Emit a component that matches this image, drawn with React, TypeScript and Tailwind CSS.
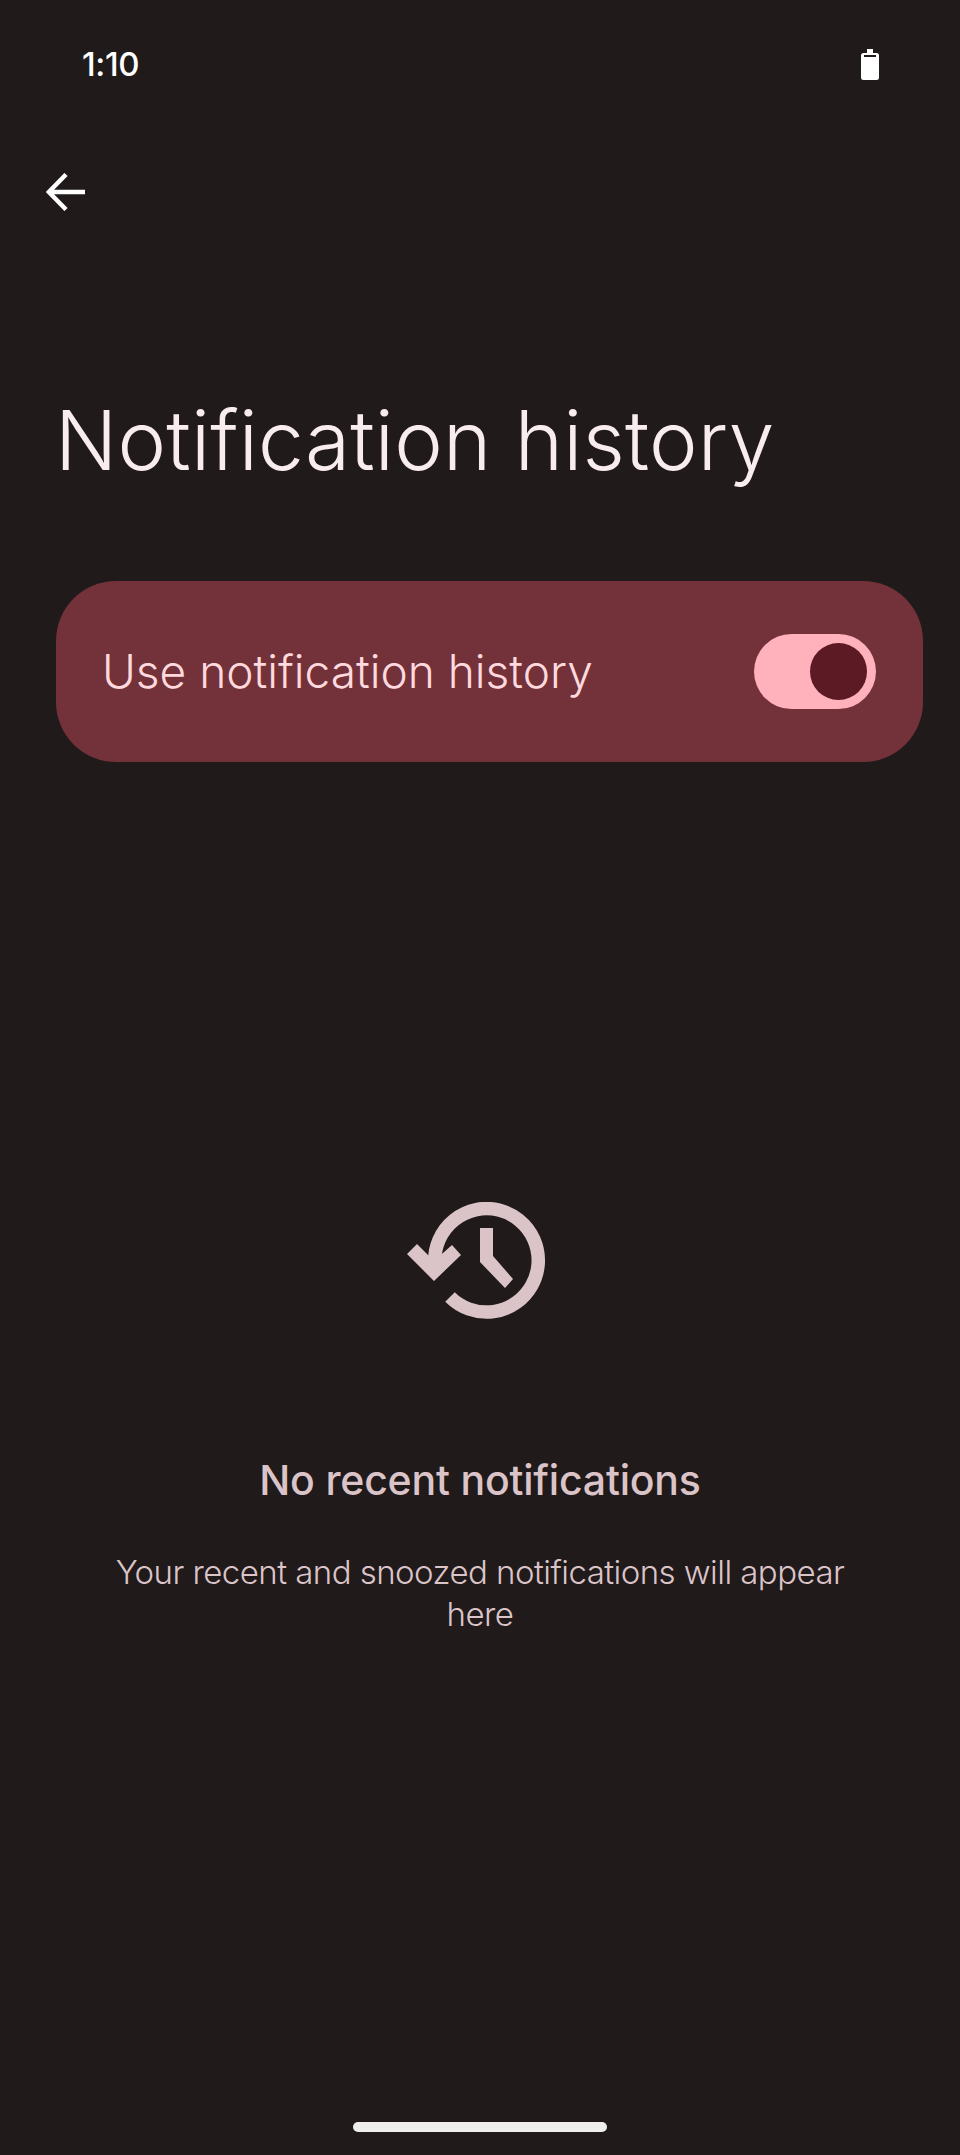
export default function App() {
  return (
    <div className="flex h-[2155px] w-[960px] flex-col overflow-hidden bg-[#201a1b] font-['Inter','Noto_Sans',sans-serif]">
      <div className="flex h-[129px] items-center justify-between pl-[82px] pr-[81px]">
        <span className="-mt-[1px] text-[33px] leading-[40px] font-medium tracking-[-0.4px] text-white">1:10</span>
        <svg width="18" height="31" viewBox="0 0 18 31" aria-hidden="true">
          <path d="M6 0h6v4h3.500A2.500 2.500 0 0 1 18 6.500V28.500A2.500 2.500 0 0 1 15.500 31H2.500A2.500 2.500 0 0 1 0 28.500V6.500A2.500 2.500 0 0 1 2.500 4H6z" fill="#fff" />
          <rect x="3" y="6" width="12" height="2" fill="#201a1b" />
        </svg>
      </div>
      <div className="mt-[44px] pl-[46px]">
        <svg className="block" width="39" height="38" viewBox="0 0 39 38" aria-hidden="true">
          <path d="M39 19H3M20 1.500 2.800 19 20 36.500" fill="none" stroke="#fff" strokeWidth="4.500" />
        </svg>
      </div>
      <h1 className="mt-[180px] pl-[55px] text-[82px] leading-[100px] font-[350] tracking-[0.2px] text-[#f9ecee]">Notification history</h1>
      <div className="ml-[56px] mt-[90px] flex h-[181px] w-[867px] items-center justify-between rounded-[60px] bg-[#733239] pl-[46px] pr-[47px]">
        <span className="-mt-[1px] text-[46px] leading-[60px] font-[350] tracking-[0px] text-[#ffd9de]">Use notification history</span>
        <div className="flex h-[75px] w-[122px] items-center justify-end rounded-full bg-[#ffb2bc] pr-[9px]">
          <div className="h-[57px] w-[57px] rounded-full bg-[#5b1a24]" />
        </div>
      </div>
      <div className="mt-[440px] flex justify-center">
        <svg className="block" width="150" height="118" viewBox="405 1202 150 118" aria-hidden="true">
          <path d="M434.800 1262A51.750 51.750 0 1 1 450 1297" fill="none" stroke="#dbc4c8" strokeWidth="13.500" />
          <path d="M407 1254 417 1244 434 1261 452 1245 461 1255 434 1281z" fill="#dbc4c8" />
          <path d="M480 1228H493V1256L513 1279 505 1288 480 1262z" fill="#dbc4c8" />
        </svg>
      </div>
      <div className="mt-[134px] text-center text-[41px] leading-[52px] font-[450] tracking-[-0.2px] text-[#dbc4c8]">No recent notifications</div>
      <p className="mt-[45px] px-[100px] text-center text-[33px] leading-[42px] font-[350] tracking-[-0.55px] text-[#dbc4c8]">Your recent and snoozed notifications will appear here</p>
      <div className="mt-auto mb-[23px] flex justify-center">
        <div className="h-[10px] w-[254px] rounded-full bg-[#f1eeee]" />
      </div>
    </div>
  );
}
